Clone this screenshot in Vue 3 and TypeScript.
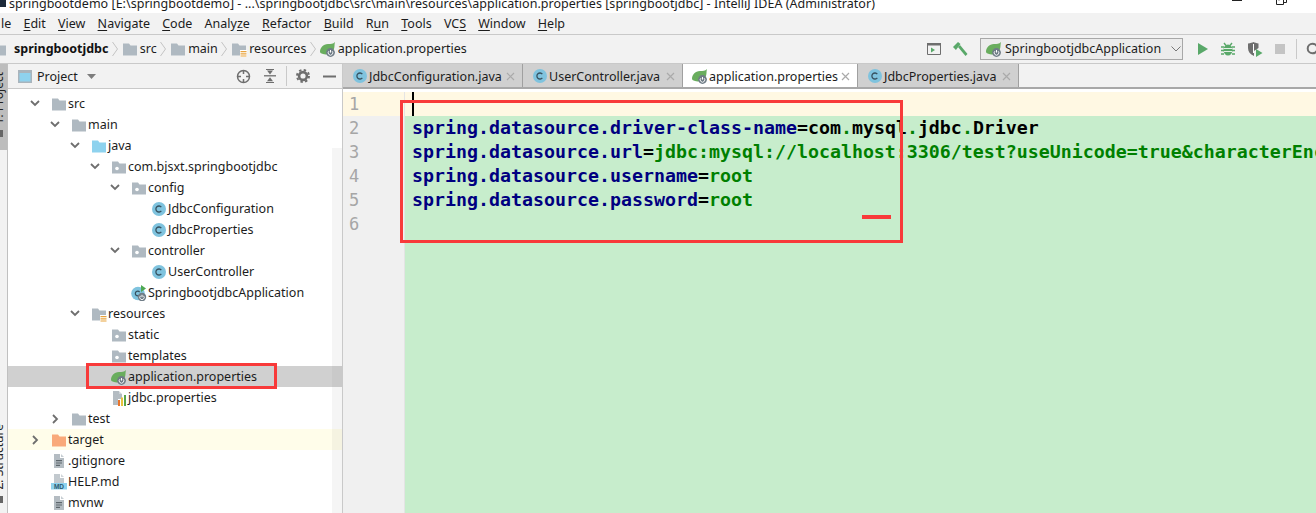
<script setup lang="ts">
interface Node { label: string; depth: number; icon: string; arrow?: 'down' | 'right'; cls?: string }

const menus = [
  { before: '', key: 'E', after: 'dit' },
  { before: '', key: 'V', after: 'iew' },
  { before: '', key: 'N', after: 'avigate' },
  { before: '', key: 'C', after: 'ode' },
  { before: 'Analy', key: 'z', after: 'e' },
  { before: '', key: 'R', after: 'efactor' },
  { before: '', key: 'B', after: 'uild' },
  { before: 'R', key: 'u', after: 'n' },
  { before: '', key: 'T', after: 'ools' },
  { before: 'VC', key: 'S', after: '' },
  { before: '', key: 'W', after: 'indow' },
  { before: '', key: 'H', after: 'elp' },
]

const tree: Node[] = [
  { label: 'src', depth: 0, icon: 'folder', arrow: 'down' },
  { label: 'main', depth: 1, icon: 'folder', arrow: 'down' },
  { label: 'java', depth: 2, icon: 'java', arrow: 'down' },
  { label: 'com.bjsxt.springbootjdbc', depth: 3, icon: 'pkg', arrow: 'down' },
  { label: 'config', depth: 4, icon: 'pkg', arrow: 'down' },
  { label: 'JdbcConfiguration', depth: 5, icon: 'class' },
  { label: 'JdbcProperties', depth: 5, icon: 'class' },
  { label: 'controller', depth: 4, icon: 'pkg', arrow: 'down' },
  { label: 'UserController', depth: 5, icon: 'class' },
  { label: 'SpringbootjdbcApplication', depth: 4, icon: 'boot' },
  { label: 'resources', depth: 2, icon: 'res', arrow: 'down' },
  { label: 'static', depth: 3, icon: 'pkg' },
  { label: 'templates', depth: 3, icon: 'pkg' },
  { label: 'application.properties', depth: 3, icon: 'spring', cls: 'selected' },
  { label: 'jdbc.properties', depth: 3, icon: 'props' },
  { label: 'test', depth: 1, icon: 'folder', arrow: 'right' },
  { label: 'target', depth: 0, icon: 'target', arrow: 'right', cls: 'excluded' },
  { label: '.gitignore', depth: 0, icon: 'doc' },
  { label: 'HELP.md', depth: 0, icon: 'md' },
  { label: 'mvnw', depth: 0, icon: 'doc' },
]

const tabs = [
  { label: 'JdbcConfiguration.java', icon: 'class', active: false, width: 180 },
  { label: 'UserController.java', icon: 'class', active: false, width: 160 },
  { label: 'application.properties', icon: 'spring', active: true, width: 175 },
  { label: 'JdbcProperties.java', icon: 'class', active: false, width: 161 },
]

const crumbs = [
  { label: 'src', icon: 'folder' },
  { label: 'main', icon: 'folder' },
  { label: 'resources', icon: 'res' },
  { label: 'application.properties', icon: 'spring' },
]

const rowPad = (d: number) => ({ paddingLeft: `${19 + d * 20}px` })
</script>

<template>
  <div class="app">
    <svg class="defs" width="0" height="0" aria-hidden="true">
      <defs>
        <symbol id="folder" viewBox="0 0 16 16"><path d="M1 2.5h6l1.5 2H15v10H1z" fill="#afb9c1" /></symbol>
        <symbol id="java" viewBox="0 0 16 16"><path d="M1 2.5h6l1.5 2H15v10H1z" fill="#8ed2ee" /></symbol>
        <symbol id="target" viewBox="0 0 16 16"><path d="M1 2.5h6l1.5 2H15v10H1z" fill="#f9a97a" /></symbol>
        <symbol id="pkg" viewBox="0 0 16 16"><path d="M1 2.5h6l1.5 2H15v10H1z" fill="#afb9c1" /><circle cx="6" cy="9.5" r="1.8" fill="#fff" /></symbol>
        <symbol id="res" viewBox="0 0 16 16"><path d="M1 2.5h6l1.5 2H15v10H1z" fill="#afb9c1" /><path d="M9 9h7v7H9z" fill="#fff" /><path d="M9.5 10h6v1.2h-6zM9.5 12.2h6v1.2h-6zM9.5 14.4h6v1.2h-6z" fill="#e8a33d" /></symbol>
        <symbol id="class" viewBox="0 0 16 16"><circle cx="8" cy="8" r="7" fill="#7fc3de" /><path d="M10.3 6.2A3 3 0 1 0 10.3 9.8" fill="none" stroke="#36505e" stroke-width="1.3" /></symbol>
        <symbol id="boot" viewBox="0 0 16 16"><circle cx="7" cy="8.5" r="6.8" fill="#7fc3de" /><path d="M8.6 7A2.4 2.4 0 1 0 8.6 10" fill="none" stroke="#36505e" stroke-width="1.2" /><path d="M10 0v7l5-3.5z" fill="#4fa852" /><circle cx="11" cy="12" r="4.2" fill="#6f7c86" /><path d="M11 9.8v2.4" stroke="#fff" stroke-width="1" /><path d="M9.5 10.8a2.2 2.2 0 1 0 3 0" fill="none" stroke="#fff" stroke-width=".9" /></symbol>
        <symbol id="spring" viewBox="0 0 16 16"><path d="M15 1C14 4 15.5 8 12 11c-2 2-6 3-9 2-2-.5-2.5-1-3-2 0-4 3-8 8-8 3 0 5 0 7-2z" fill="#69ad5e" /><circle cx="10.5" cy="11.5" r="4.4" fill="#6f7c86" /><path d="M10.5 9v2.6" stroke="#fff" stroke-width="1" /><path d="M8.9 10.2a2.3 2.3 0 1 0 3.2 0" fill="none" stroke="#fff" stroke-width=".9" /></symbol>
        <symbol id="doc" viewBox="0 0 16 16"><path d="M3 1h6v4h4v10H3z" fill="#b4bcc2" /><path d="M10 1l3 3h-3z" fill="#c6cdd2" /><path d="M5 7h6v1.2H5zM5 9.4h6v1.2H5zM5 11.8h4v1.2H5z" fill="#5d666c" /></symbol>
        <symbol id="md" viewBox="0 0 16 16"><path d="M3 0h6v4h4v6H3z" fill="#c2c9ce" /><path d="M10 0l3 3h-3z" fill="#d0d5d9" /><path d="M0 9h16v6.5H0z" fill="#8ed2ee" /><text x="8" y="14.500" text-anchor="middle" font-size="6.500" font-weight="700" font-family="Liberation Sans, sans-serif" fill="#2c5a70">MD</text></symbol>
        <symbol id="props" viewBox="0 0 16 16"><path d="M2 1h6v3h3v5H7v6H2z" fill="#b4bcc2" /><path d="M8 1l3 3H8z" fill="#cdd3d7" /><path d="M7 10h2v6H7z" fill="#e9742b" /><path d="M10 7.5h2V16h-2z" fill="#e8c33d" /><path d="M13 5h2v11h-2z" fill="#57a64a" /></symbol>
      </defs>
    </svg>

    <header class="titlebar">
      <span class="app-mark"></span>
      <span class="title">springbootdemo [E:\springbootdemo] - ...\springbootjdbc\src\main\resources\application.properties [springbootjdbc] - IntelliJ IDEA (Administrator)</span>
      <span class="win-btns">
        <svg width="10" height="2"><path d="M0 .5h10" stroke="#222" /></svg>
        <svg width="11" height="5"><path d="M.5 0v4.5h7V0M3 0v.5M10.5 0v2.5H8" fill="none" stroke="#222" /></svg>
      </span>
    </header>

    <nav class="menubar">
      <span class="menu file">le</span>
      <span v-for="m in menus" :key="m.key + m.after" class="menu">{{ m.before }}<u>{{ m.key }}</u>{{ m.after }}</span>
    </nav>

    <div class="crumbbar">
      <div class="crumbs">
        <svg class="ic16 cut"><use href="#folder" /></svg>
        <b class="root">springbootjdbc</b>
        <template v-for="c in crumbs" :key="c.label">
          <svg class="sep" width="6" height="16" viewBox="0 0 6 16"><path d="M.5 1l5 7-5 7" fill="none" stroke="#c4c4c4" /></svg>
          <svg class="ic16"><use :href="'#' + c.icon" /></svg>
          <span class="crumb-text">{{ c.label }}</span>
        </template>
      </div>
      <div class="tools">
        <svg width="16" height="16" viewBox="0 0 16 16"><path d="M1.500 2.500h13v11h-13z" fill="none" stroke="#6e6e6e" /><path d="M1 2h14v2.500H1z" fill="#6e6e6e" /><path d="M5 6.500v5l4-2.500z" fill="#59a869" /></svg>
        <svg class="hammer" width="16" height="16" viewBox="0 0 16 16"><path d="M1 6l5-5 2.500 2-4.600 6z" fill="#59a869" /><path d="M6 6l2-2 7.500 9-2 2z" fill="#59a869" /></svg>
        <div class="combo">
          <svg class="ic16"><use href="#spring" /></svg>
          <span class="combo-text">SpringbootjdbcApplication</span>
          <svg width="10" height="6" viewBox="0 0 10 6"><path d="M.5.5L5 5 9.500.5" fill="none" stroke="#777" /></svg>
        </div>
        <svg class="run" width="12" height="14" viewBox="0 0 12 14"><path d="M1 1v12l10-6z" fill="#59a869" /></svg>
        <svg class="debug" width="14" height="14" viewBox="0 0 14 14"><ellipse cx="7" cy="8" rx="4.500" ry="5.500" fill="#59a869" /><path d="M3 1l2 2.500M11 1L9 3.500M0 5h3M14 5h-3M0 8.500h3M14 8.500h-3M0 12h3M14 12h-3" stroke="#59a869" stroke-width="1.400" /><path d="M3 6.500h8M3 9.500h8" stroke="#e4f0e6" /></svg>
        <svg class="cover" width="16" height="16" viewBox="0 0 16 16"><path d="M1 2.500C3.500 2 5.500 1.500 6.500 1c1 .5 3 1 5 1.500V7L7 10v5C3 13.500 1 10.500 1 7z" fill="#6e6e6e" /><path d="M6.500 3v9" stroke="#fff" stroke-width="1" /><path d="M9 8v8l6.500-4z" fill="#59a869" /></svg>
        <span class="stop"></span>
        <span class="vsep"></span>
        <svg class="search" width="14" height="15" viewBox="0 0 14 15"><circle cx="6.500" cy="6.500" r="4.800" fill="none" stroke="#6e6e6e" stroke-width="2" /><path d="M10 10l4 4" stroke="#6e6e6e" stroke-width="2" /></svg>
      </div>
    </div>

    <main class="workspace">
      <aside class="stripe">
        <div class="stripe-btn"><span class="vtext">1: Project</span><i class="mark"></i></div>
        <div class="stripe-low"><span class="vtext">Z: Structure</span><i class="mark"></i></div>
      </aside>

      <section class="panel">
        <div class="panel-head">
          <svg class="panel-icon" width="14" height="13" viewBox="0 0 14 13"><path d="M0 0h14v13H0z" fill="#a9b4bc" /><path d="M1.500 3h11v8.500h-11z" fill="#8ed2ee" /></svg>
          <span class="panel-title">Project</span>
          <svg class="caret" width="9" height="5" viewBox="0 0 9 5"><path d="M0 0h9L4.500 5z" fill="#7d7d7d" /></svg>
          <div class="panel-actions">
            <svg width="15" height="15" viewBox="0 0 15 15"><circle cx="7.500" cy="7.500" r="6" fill="none" stroke="#6e6e6e" stroke-width="1.500" /><path d="M7.500 1v4M7.500 10v4M1 7.500h4M10 7.500h4" stroke="#6e6e6e" stroke-width="1.500" /></svg>
            <svg class="collapse" width="14" height="14" viewBox="0 0 14 14"><path d="M1 6.800h12" stroke="#6e6e6e" stroke-width="1.300" /><path d="M7 5.500L4 1.500h6zM7 8.200l-3 4h6z" fill="#6e6e6e" /><path d="M3 0.500h8M3 13.500h8" stroke="#6e6e6e" stroke-width="1" /></svg>
            <span class="vsep tall"></span>
            <svg width="14" height="14" viewBox="0 0 14 14"><circle cx="7" cy="7" r="3.900" fill="none" stroke="#6e6e6e" stroke-width="2.600" /><circle cx="7" cy="7" r="6" fill="none" stroke="#6e6e6e" stroke-width="2" stroke-dasharray="2.400 2.312" /></svg>
            <svg class="minus" width="13" height="3" viewBox="0 0 13 3"><path d="M0 1.500h13" stroke="#6e6e6e" stroke-width="2" /></svg>
          </div>
        </div>
        <div class="tree">
          <div v-for="n in tree" :key="n.label + n.depth" class="row" :class="n.cls" :style="rowPad(n.depth)">
            <span class="arrow">
              <svg v-if="n.arrow === 'down'" width="10" height="7" viewBox="0 0 10 7"><path d="M1 1l4 4 4-4" fill="none" stroke="#6e6e6e" stroke-width="1.800" /></svg>
              <svg v-else-if="n.arrow === 'right'" width="7" height="10" viewBox="0 0 7 10"><path d="M1 1l4 4-4 4" fill="none" stroke="#6e6e6e" stroke-width="1.800" /></svg>
            </span>
            <svg class="ic16"><use :href="'#' + n.icon" /></svg>
            <span class="row-text">{{ n.label }}</span>
          </div>
          <div class="scroll"></div>
        </div>
      </section>

      <section class="editor">
        <div class="tabs">
          <div v-for="t in tabs" :key="t.label" class="tab" :class="{ active: t.active }" :style="{ width: t.width + 'px' }">
            <svg class="ic16"><use :href="'#' + t.icon" /></svg>
            <span>{{ t.label }}</span>
            <svg class="close" width="9" height="9" viewBox="0 0 9 9"><path d="M1 1l7 7M8 1L1 8" stroke="#aaa" stroke-width="1.200" /></svg>
          </div>
        </div>
        <div class="code">
          <div class="gutter">
            <div v-for="i in 6" :key="i" class="ln" :class="{ cur: i === 1 }">{{ i }}</div>
          </div>
          <div class="lines">
            <div class="line cur"><i class="caretline"></i></div>
            <div class="line"><span class="k">spring.datasource.driver-class-name</span><span class="eq">=</span>com<span class="v">.</span>mysql<span class="v">.</span>jdbc<span class="v">.</span>Driver</div>
            <div class="line"><span class="k">spring.datasource.url</span><span class="eq">=</span><span class="v">jdbc:mysql://localhost:3306/test?useUnicode=true&amp;characterEncoding=utf-8</span></div>
            <div class="line"><span class="k">spring.datasource.username</span><span class="eq">=</span><span class="v">root</span></div>
            <div class="line"><span class="k">spring.datasource.password</span><span class="eq">=</span><span class="v">root</span></div>
          </div>
        </div>
      </section>
    </main>

    <div class="mark-box code-box"></div>
    <div class="mark-dash"></div>
    <div class="mark-box file-box"></div>
  </div>
</template>

<style>
html, body { margin: 0; overflow: hidden; background: #fff; }
</style>

<style scoped>
.app {
  position: relative;
  width: 1316px;
  height: 513px;
  overflow: hidden;
  background: #f2f2f2;
  font-family: "Noto Sans", "Open Sans", sans-serif;
  font-size: 12.5px;
  color: #1c1c1c;
  display: flex;
  flex-direction: column;
}
.defs { position: absolute; }
.ic16 { width: 16px; height: 16px; flex: none; display: block; }

.titlebar {
  height: 13px;
  flex: none;
  background: #fff;
  display: flex;
  overflow: hidden;
}
.app-mark { width: 6px; height: 7px; background: #1c2a3a; flex: none; }
.title { margin: -6px 0 0 3px; white-space: nowrap; height: 20px; line-height: 20px; letter-spacing: 0.03px; }
.win-btns { margin-left: auto; padding-right: 29px; display: flex; gap: 34px; align-items: flex-start; }
.win-btns svg { display: block; }

.menubar {
  box-sizing: border-box;
  height: 22px;
  flex: none;
  border-bottom: 1px solid #c9c9c9;
  display: flex;
  align-items: center;
  gap: 12.2px;
  padding: 0 0 1px 1px;
  white-space: nowrap;
}
.menu u { text-underline-offset: 2px; }

.crumbbar {
  box-sizing: border-box;
  height: 29px;
  flex: none;
  border-bottom: 1px solid #c9c9c9;
  display: flex;
  align-items: center;
  justify-content: space-between;
}
.crumbs { display: flex; align-items: center; white-space: nowrap; padding-bottom: 1px; }
.crumbs .cut { margin-left: -9px; }
.root { font-weight: 700; color: #111; margin-left: 7px; }
.sep { margin: 0 4px 0 3.4px; }
.crumb-text { margin-left: 2px; }
.tools { display: flex; align-items: center; }
.hammer { margin-left: 10px; }
.combo {
  box-sizing: border-box;
  width: 203px;
  height: 22px;
  margin-left: 12px;
  border: 1px solid #a8a8a8;
  background: #ececec;
  display: flex;
  align-items: center;
  padding-left: 5px;
  gap: 3px;
}
.combo-text { width: 163px; white-space: nowrap; padding-bottom: 2px; }
.run { margin-left: 14px; }
.debug { margin-left: 12px; }
.cover { margin-left: 12px; }
.stop { width: 10px; height: 10px; background: #c4c4c4; margin-left: 12px; }
.vsep { width: 1px; height: 20px; background: #c9c9c9; margin: 0 9px 0 11px; }
.search { margin-right: -4px; }

.workspace { flex: 1; min-height: 0; display: flex; }
.stripe {
  width: 7px;
  flex: none;
  border-right: 1px solid #c0c0c0;
  display: flex;
  flex-direction: column;
  justify-content: space-between;
  overflow: hidden;
}
.stripe-btn { height: 86px; background: #bdbdbd; padding-top: 8px; box-sizing: border-box; display: flex; flex-direction: column; }
.stripe-low { height: 89px; display: flex; flex-direction: column; padding-bottom: 8px; box-sizing: border-box; }
.vtext {
  writing-mode: vertical-rl;
  transform: rotate(180deg);
  font-size: 12px;
  line-height: 12px;
  width: 12px;
  margin-left: -7px;
  white-space: nowrap;
  color: #222;
}
.mark { display: block; width: 3px; height: 7px; background: #666; margin-top: 6px; }

.panel { width: 335px; flex: none; background: #fff; border-right: 1px solid #c9c9c9; box-sizing: border-box; display: flex; flex-direction: column; }
.panel-head {
  height: 25px;
  flex: none;
  box-sizing: border-box;
  background: #f2f2f2;
  border-bottom: 1px solid #c9c9c9;
  display: flex;
  align-items: center;
  padding-left: 10px;
}
.panel-title { margin-left: 5px; }
.caret { margin-left: 9px; }
.panel-actions { margin-left: auto; display: flex; align-items: center; padding-right: 6px; }
.collapse { margin-left: 12px; }
.vsep.tall { height: 20px; margin: 0 9px 0 9px; }
.minus { margin-left: 13px; }

.tree { position: relative; flex: 1; overflow: hidden; padding-top: 4px; }
.row {
  height: 21px;
  display: flex;
  align-items: center;
  white-space: nowrap;
  box-sizing: border-box;
}
.row.selected { background: #d0d0d0; }
.row.excluded { background: #fffdea; }
.arrow { width: 16px; margin-right: 8px; flex: none; display: flex; justify-content: center; align-items: center; }
.row-text { margin-left: 1px; }
.scroll {
  position: absolute;
  right: 0;
  top: 59px;
  bottom: 0;
  width: 10px;
  background: rgba(120, 120, 120, 0.07);
}

.editor { flex: 1; min-width: 0; display: flex; flex-direction: column; background: #fff; }
.tabs {
  height: 25px;
  flex: none;
  box-sizing: border-box;
  background: #f2f2f2;
  border-bottom: 2px solid #a8a8a8;
  display: flex;
}
.tab {
  box-sizing: border-box;
  height: 23px;
  background: #d0d0d0;
  border-right: 1px solid #a0a0a0;
  display: flex;
  align-items: center;
  padding: 1px 7px 0 9px;
  gap: 1px;
  white-space: nowrap;
}
.tab.active { background: #fff; }
.close { margin-left: auto; }

.code { flex: 1; margin-top: 3px; display: flex; min-height: 0; font-family: "DejaVu Sans Mono", "Liberation Mono", monospace; font-size: 18.27px; line-height: 24px; }
.gutter { width: 62px; flex: none; background: #f0f0f0; box-sizing: border-box; border-right: 1px solid #e4e4e4; }
.ln { height: 24px; padding-left: 6px; color: #a6a6a6; font-weight: 400; font-size: 17px; }
.ln.cur { background: #fff8e3; }
.lines { flex: 1; min-width: 0; background: #c7edcc; overflow: hidden; font-weight: 700; color: #000; }
.line { height: 24px; padding-left: 7px; white-space: pre; position: relative; }
.line.cur { background: #fff8e3; }
.caretline { position: absolute; left: 7px; top: 0; width: 2px; height: 24px; background: #000; }
.k { color: #000080; }
.eq { color: #000; }
.v { color: #008000; }

.mark-box { position: absolute; box-sizing: border-box; border: 3px solid #f83a3a; }
.code-box { left: 400px; top: 100px; width: 503px; height: 143px; }
.file-box { left: 86px; top: 363px; width: 191px; height: 26px; }
.mark-dash { position: absolute; left: 862px; top: 215px; width: 29px; height: 4px; background: #f83a3a; }
</style>
